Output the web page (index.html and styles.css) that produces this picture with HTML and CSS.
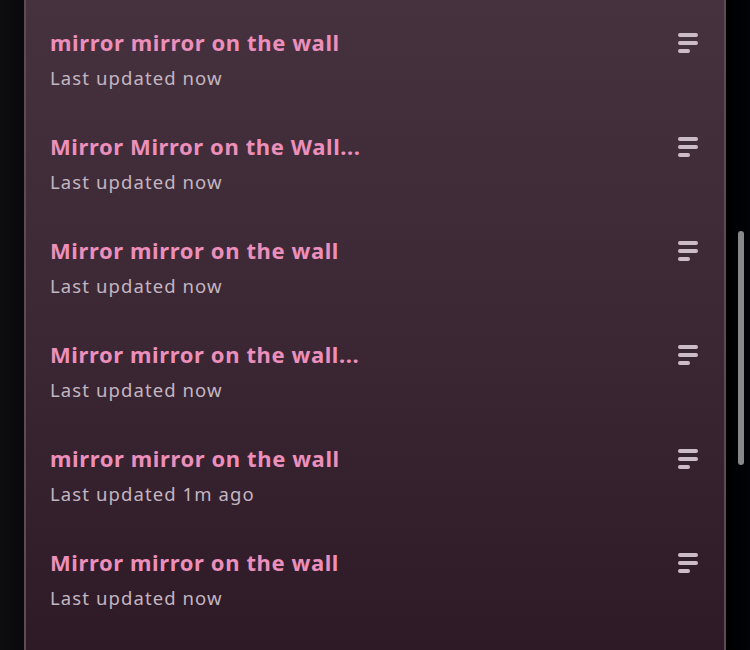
FILE: index.html
```html
<!DOCTYPE html>
<html>
<head>
<meta charset="utf-8">
<link rel="stylesheet" href="styles.css">
</head>
<body>
<div class="page">
  <div class="panel">
    <div class="item">
      <div class="text"><div class="title">mirror mirror on the wall</div><div class="sub">Last updated now</div></div>
      <svg class="icon" width="20" height="20" viewBox="0 0 20 20"><rect x="0" y="2" width="20" height="4" rx="2"/><rect x="0" y="10" width="20" height="4" rx="2"/><rect x="0" y="18" width="12" height="4" rx="2"/></svg>
    </div>
    <div class="item">
      <div class="text"><div class="title">Mirror Mirror on the Wall...</div><div class="sub">Last updated now</div></div>
      <svg class="icon" width="20" height="20" viewBox="0 0 20 20"><rect x="0" y="2" width="20" height="4" rx="2"/><rect x="0" y="10" width="20" height="4" rx="2"/><rect x="0" y="18" width="12" height="4" rx="2"/></svg>
    </div>
    <div class="item">
      <div class="text"><div class="title">Mirror mirror on the wall</div><div class="sub">Last updated now</div></div>
      <svg class="icon" width="20" height="20" viewBox="0 0 20 20"><rect x="0" y="2" width="20" height="4" rx="2"/><rect x="0" y="10" width="20" height="4" rx="2"/><rect x="0" y="18" width="12" height="4" rx="2"/></svg>
    </div>
    <div class="item">
      <div class="text"><div class="title">Mirror mirror on the wall...</div><div class="sub">Last updated now</div></div>
      <svg class="icon" width="20" height="20" viewBox="0 0 20 20"><rect x="0" y="2" width="20" height="4" rx="2"/><rect x="0" y="10" width="20" height="4" rx="2"/><rect x="0" y="18" width="12" height="4" rx="2"/></svg>
    </div>
    <div class="item">
      <div class="text"><div class="title">mirror mirror on the wall</div><div class="sub">Last updated 1m ago</div></div>
      <svg class="icon" width="20" height="20" viewBox="0 0 20 20"><rect x="0" y="2" width="20" height="4" rx="2"/><rect x="0" y="10" width="20" height="4" rx="2"/><rect x="0" y="18" width="12" height="4" rx="2"/></svg>
    </div>
    <div class="item">
      <div class="text"><div class="title">Mirror mirror on the wall</div><div class="sub">Last updated now</div></div>
      <svg class="icon" width="20" height="20" viewBox="0 0 20 20"><rect x="0" y="2" width="20" height="4" rx="2"/><rect x="0" y="10" width="20" height="4" rx="2"/><rect x="0" y="18" width="12" height="4" rx="2"/></svg>
    </div>
  </div>
  <div class="scrollbar"></div>
</div>
</body>
</html>
```
FILE: styles.css
```css
html, body {
  margin: 0;
  height: 100%;
  overflow: hidden;
}
body {
  background: linear-gradient(90deg, #0d0c0f 0%, #09090b 24px, #000 726px, #020308 100%);
  font-family: "Noto Sans", "DejaVu Sans", sans-serif;
}
.page {
  position: relative;
  height: 650px;
  display: flex;
}
.panel {
  margin-left: 24px;
  width: 698px;
  height: 650px;
  border-left: 2px solid #5d4a59;
  border-right: 2px solid #5d4a59;
  background: linear-gradient(180deg, #46323f 0%, #3c2835 50%, #2d1a26 100%);
  display: flex;
  flex-direction: column;
}
.item {
  height: 104px;
  flex: none;
  box-sizing: border-box;
  padding: 28px 26px 0 24px;
  display: flex;
  justify-content: space-between;
  align-items: flex-start;
}
.text {
  display: flex;
  flex-direction: column;
  gap: 10px;
}
.title {
  color: #ec8fba;
  font-weight: 700;
  font-size: 22px;
  line-height: 28px;
  letter-spacing: 0.6px;
}
.sub {
  color: #c3b5c0;
  font-size: 18.5px;
  line-height: 24px;
  letter-spacing: 1.1px;
}
.icon {
  fill: #cbbcc8;
  margin-top: 3px;
  overflow: visible;
}
.scrollbar {
  position: absolute;
  left: 738px;
  top: 231px;
  width: 6px;
  height: 234px;
  border-radius: 3px;
  background: #888;
}
```
